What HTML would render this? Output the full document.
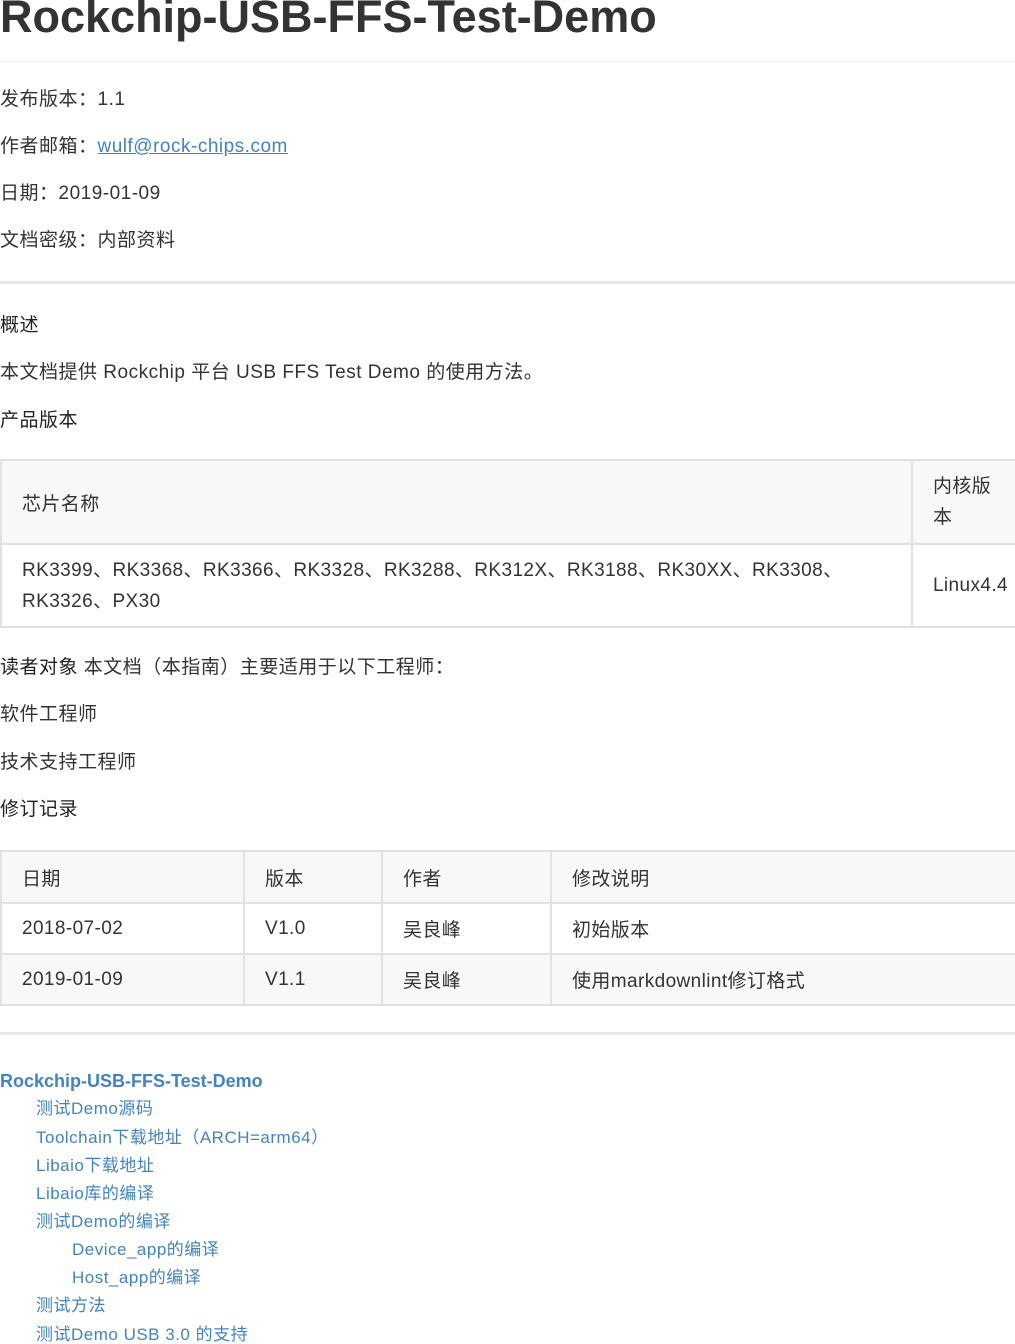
<!DOCTYPE html>
<html><head><meta charset="utf-8"><style>
body{margin:0;width:1015px;height:1342px;overflow:hidden;background:#fff;color:#333;font-family:"Liberation Sans","Noto Sans CJK SC",sans-serif;position:relative}
.a{position:absolute;white-space:nowrap;line-height:1}
.p{font-size:19px;left:0;letter-spacing:0.5px}
.h{font-size:19px;color:#222;left:0;letter-spacing:0.5px}
a{color:#4183c4}
.t{position:absolute;left:0;width:1030px;border-collapse:collapse;font-size:19px;letter-spacing:0.4px}
.t td{border:2px solid #dfe2e5;padding:0 20px;vertical-align:middle}
.toc{position:absolute;font-size:17px;color:#4183c4;line-height:1;white-space:nowrap;letter-spacing:0.5px}
</style></head><body>
<div class="a" style="left:0;top:-6px;font-size:45px;font-weight:bold;color:#333">Rockchip-USB-FFS-Test-Demo</div>
<div style="position:absolute;left:0;top:61px;width:1015px;height:1px;background:#eee"></div>
<div class="a p" style="top:90px">发布版本：1.1</div>
<div class="a p" style="top:137px">作者邮箱：<a href="#">wulf@rock-chips.com</a></div>
<div class="a p" style="top:184px">日期：2019-01-09</div>
<div class="a p" style="top:231px">文档密级：内部资料</div>
<div style="position:absolute;left:0;top:281px;width:1015px;height:3px;background:#e7e7e7"></div>
<div class="a h" style="top:316px">概述</div>
<div class="a p" style="top:363px">本文档提供 Rockchip 平台 USB FFS Test Demo 的使用方法。</div>
<div class="a h" style="top:411px">产品版本</div>
<table class="t" style="top:459px">
<tr style="height:84px;background:#f8f8f8"><td style="width:872px">芯片名称</td><td style="line-height:31px">内核版<br>本</td></tr>
<tr style="height:83px"><td style="line-height:31px">RK3399、RK3368、RK3366、RK3328、RK3288、RK312X、RK3188、RK30XX、RK3308、<br>RK3326、PX30</td><td>Linux4.4</td></tr>
</table>
<div class="a p" style="top:658px"><span style="color:#222">读者对象</span> 本文档（本指南）主要适用于以下工程师：</div>
<div class="a p" style="top:705px">软件工程师</div>
<div class="a p" style="top:753px">技术支持工程师</div>
<div class="a h" style="top:800px">修订记录</div>
<table class="t" style="top:850px">
<tr style="height:52px;background:#f8f8f8"><td style="width:201px">日期</td><td style="width:96px">版本</td><td style="width:127px">作者</td><td>修改说明</td></tr>
<tr style="height:51px"><td>2018-07-02</td><td>V1.0</td><td>吴良峰</td><td>初始版本</td></tr>
<tr style="height:51px;background:#f8f8f8"><td>2019-01-09</td><td>V1.1</td><td>吴良峰</td><td>使用markdownlint修订格式</td></tr>
</table>
<div style="position:absolute;left:0;top:1032px;width:1015px;height:3px;background:#e7e7e7"></div>
<div class="toc" style="left:0;top:1072px;font-weight:bold;font-size:18px;letter-spacing:0">Rockchip-USB-FFS-Test-Demo</div>
<div class="toc" style="left:36px;top:1100px">测试Demo源码</div>
<div class="toc" style="left:36px;top:1129px">Toolchain下载地址（ARCH=arm64）</div>
<div class="toc" style="left:36px;top:1157px">Libaio下载地址</div>
<div class="toc" style="left:36px;top:1185px">Libaio库的编译</div>
<div class="toc" style="left:36px;top:1213px">测试Demo的编译</div>
<div class="toc" style="left:72px;top:1241px">Device_app的编译</div>
<div class="toc" style="left:72px;top:1269px">Host_app的编译</div>
<div class="toc" style="left:36px;top:1297px">测试方法</div>
<div class="toc" style="left:36px;top:1326px">测试Demo USB 3.0 的支持</div>
</body></html>
